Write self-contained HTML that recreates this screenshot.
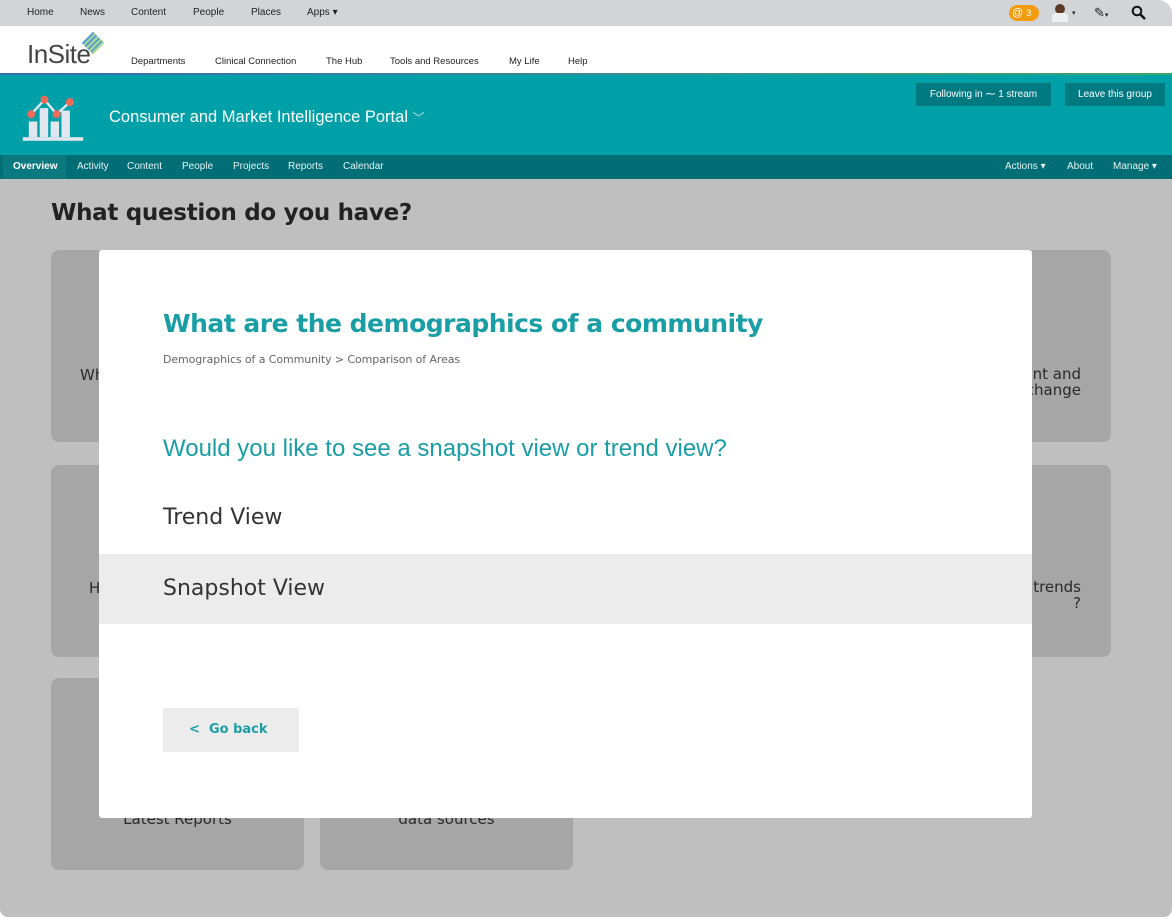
<!DOCTYPE html>
<html><head><meta charset="utf-8"><style>
*{margin:0;padding:0;box-sizing:border-box}
html,body{width:1172px;height:917px;background:#fff;overflow:hidden;font-family:"Liberation Sans",Arial,sans-serif}
#wrap{position:absolute;left:0;top:0;width:1172px;height:917px;border-radius:0 14px 8px 8px;overflow:hidden;background:#bfbfbf}
.top{position:absolute;left:0;top:0;width:1172px;height:26px;background:#d3d4d8;font-size:10px;color:#222}
.top span{position:absolute;top:7px}
.hdr{position:absolute;top:26px;left:0;width:1172px;height:48px;background:#fff;font-size:9.5px;color:#222}
.hdr .n{position:absolute;top:30px}
.line{position:absolute;top:73px;left:0;width:1172px;height:2px;background:linear-gradient(90deg,#3a6bb8,#3aa86b)}
.band{position:absolute;top:75px;left:0;width:1172px;height:80px;background:#00a0a8}
.sub{position:absolute;top:155px;left:0;width:1172px;height:24px;background:#006e74;font-size:10px;color:#e6f3f3}
.sub span{position:absolute;top:6px}
.btn{position:absolute;top:83px;height:23px;background:#007a80;color:#fff;font-size:10px;line-height:23px;text-align:center}
h1{position:absolute;left:51px;top:200px;font-size:23px;font-weight:bold;color:#222;font-family:"DejaVu Sans","Liberation Sans",sans-serif;letter-spacing:-0.3px}
.card{position:absolute;width:253px;height:192px;background:#a6a6a6;border-radius:8px;font-family:"DejaVu Sans",sans-serif;font-size:15px;color:#2a2a2a;text-align:center}
.modal{position:absolute;left:99px;top:250px;width:933px;height:568px;background:#fff;border-radius:3px}
.mt{position:absolute;left:64px;top:59px;font-family:"DejaVu Sans",sans-serif;font-weight:bold;font-size:25px;color:#1a9ea6;letter-spacing:-0.5px}
.bc{position:absolute;left:64px;top:103px;font-family:"DejaVu Sans",sans-serif;font-size:11px;color:#666;letter-spacing:-0.1px}
.q{position:absolute;left:64px;top:185px;font-size:24px;color:#1a9ea6}
.opt{position:absolute;left:0;width:933px;height:70px;font-family:"DejaVu Sans",sans-serif;font-size:22px;color:#333;padding-left:64px;line-height:70px}
.back{position:absolute;left:64px;top:458px;width:136px;height:44px;background:#ececec;border-radius:2px;color:#1a9ea6;font-family:"DejaVu Sans",sans-serif;font-weight:bold;font-size:13px;line-height:44px;padding-left:26px}
</style></head><body><div id="wrap">
<div class="top">
<span style="left:27px">Home</span><span style="left:80px">News</span><span style="left:131px">Content</span><span style="left:193px">People</span><span style="left:251px">Places</span><span style="left:307px">Apps ▾</span>
<div style="position:absolute;left:1009px;top:5px;width:30px;height:16px;background:#f39c12;border-radius:8px;color:#fff;font-size:11px;line-height:16px;padding-left:3px">@ <span style="position:static;font-size:9px">3</span></div>
<div style="position:absolute;left:1055px;top:4px;width:10px;height:10px;border-radius:50%;background:#5a3a22"></div>
<div style="position:absolute;left:1052px;top:13px;width:16px;height:9px;background:#eee;border-radius:4px 4px 0 0"></div>
<span style="left:1072px;font-size:7px;top:9px">▾</span>
<span style="left:1094px;top:5px;font-size:13px">✎<span style="position:static;font-size:7px">▾</span></span>
<svg style="position:absolute;left:1131px;top:5px" width="15" height="15" viewBox="0 0 15 15"><circle cx="6" cy="6" r="4.3" fill="none" stroke="#111" stroke-width="2"/><path d="M9 9l5 5" stroke="#111" stroke-width="2.4"/></svg>
</div>
<div class="hdr">
<div style="position:absolute;left:27px;top:13px;font-size:26px;color:#444;font-family:'Liberation Sans',sans-serif;letter-spacing:-0.5px">InSite</div>
<div style="position:absolute;left:85px;top:9px;width:16px;height:16px;transform:rotate(45deg);background:repeating-linear-gradient(90deg,#3a8ed0 0 2px,#9bd27a 2px 4px);opacity:.85"></div>
<span class="n" style="left:131px">Departments</span><span class="n" style="left:215px">Clinical Connection</span><span class="n" style="left:326px">The Hub</span><span class="n" style="left:390px">Tools and Resources</span><span class="n" style="left:509px">My Life</span><span class="n" style="left:568px">Help</span>
</div>
<div class="line"></div>
<div class="band">
<svg style="position:absolute;left:21px;top:15px" width="64" height="52" viewBox="0 0 52 43"><rect x="1" y="39" width="50" height="3" fill="#e2e6ee"/><rect x="6" y="26" width="7" height="13" fill="#e2e6ee"/><rect x="15" y="15" width="7" height="24" fill="#e2e6ee"/><rect x="24" y="26" width="7" height="13" fill="#e2e6ee"/><rect x="33" y="17" width="7" height="22" fill="#e2e6ee"/><path d="M8 20L19 8L29 20L40 10" stroke="#e2e6ee" stroke-width="2" fill="none"/><circle cx="8" cy="20" r="3.3" fill="#f06a5a"/><circle cx="19" cy="8" r="3.3" fill="#f06a5a"/><circle cx="29" cy="20" r="3.3" fill="#f06a5a"/><circle cx="40" cy="10" r="3.3" fill="#f06a5a"/></svg>
<div style="position:absolute;left:109px;top:33px;font-size:16.5px;color:#fff">Consumer and Market Intelligence Portal <span style="font-size:12px;color:#bfe3e5">﹀</span></div>
</div>
<div class="btn" style="left:916px;width:135px">Following in ⁓ 1 stream</div>
<div class="btn" style="left:1065px;width:100px">Leave this group</div>
<div class="sub">
<div style="position:absolute;left:3px;top:0;width:63px;height:24px;background:#0b7a80"></div>
<span style="left:13px;font-weight:bold;color:#fff">Overview</span><span style="left:77px">Activity</span><span style="left:127px">Content</span><span style="left:182px">People</span><span style="left:233px">Projects</span><span style="left:288px">Reports</span><span style="left:343px">Calendar</span>
<span style="left:1005px">Actions ▾</span><span style="left:1067px">About</span><span style="left:1113px">Manage ▾</span>
</div>
<h1>What question do you have?</h1>
<div class="card" style="left:51px;top:250px"><div style="position:absolute;left:29px;top:116px">Wh</div></div>
<div class="card" style="left:858px;top:250px"><div style="position:absolute;right:30px;top:116px;text-align:right;line-height:16px">nt and<br>change</div></div>
<div class="card" style="left:51px;top:465px"><div style="position:absolute;left:38px;top:114px">H</div></div>
<div class="card" style="left:858px;top:465px"><div style="position:absolute;right:30px;top:114px;text-align:right;line-height:16px">trends<br>?</div></div>
<div class="card" style="left:51px;top:678px"><div style="position:absolute;left:0;width:253px;top:114px;line-height:18px">Access Latest<br>Latest Reports</div></div>
<div class="card" style="left:320px;top:678px"><div style="position:absolute;left:0;width:253px;top:114px;line-height:18px">Other<br>data sources</div></div>
<div class="modal">
<div class="mt">What are the demographics of a community</div>
<div class="bc">Demographics of a Community &gt; Comparison of Areas</div>
<div class="q">Would you like to see a snapshot view or trend view?</div>
<div class="opt" style="top:233px">Trend View</div>
<div class="opt" style="top:304px;background:#ececec">Snapshot View</div>
<div class="back">&lt;&nbsp; Go back</div>
</div>
</div></body></html>
